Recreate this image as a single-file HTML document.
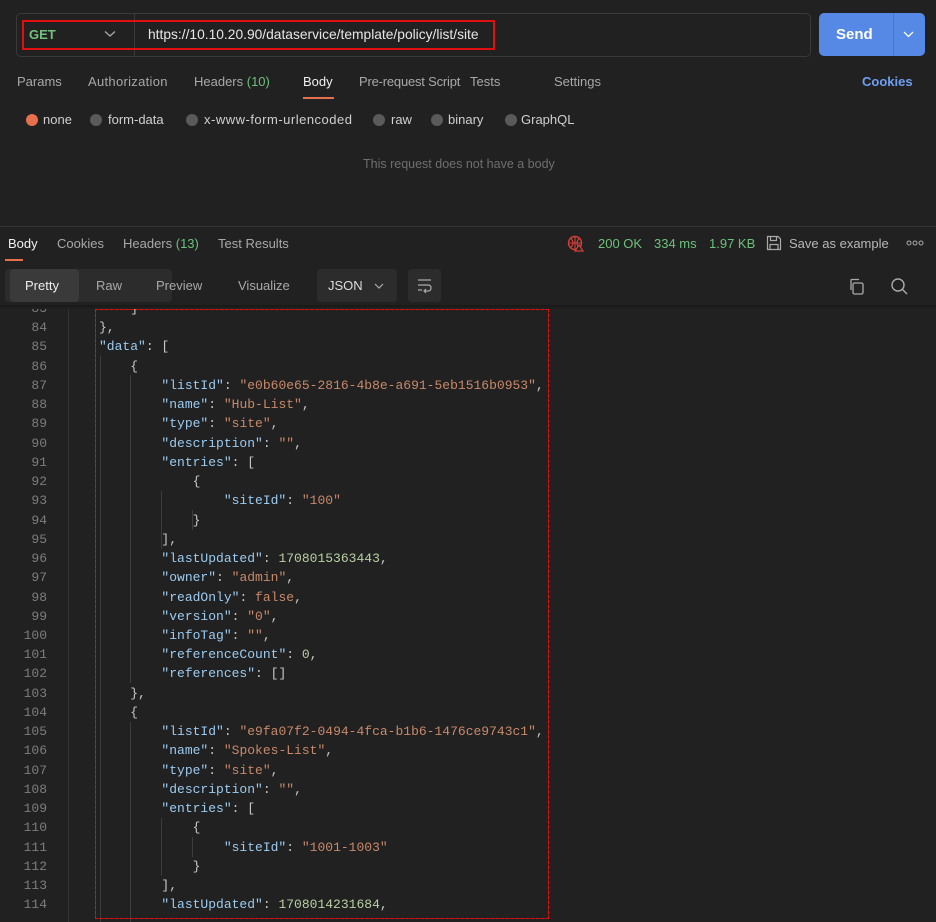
<!DOCTYPE html>
<html><head><meta charset="utf-8"><style>
*{margin:0;padding:0;box-sizing:border-box}
body{width:936px;height:922px;background:#212121;font-family:"Liberation Sans",sans-serif;font-size:13px;color:#a8a8a8;position:relative;overflow:hidden}
.a{position:absolute;white-space:nowrap}
.g{color:#6cc17a}
.code{position:absolute;left:0;top:309px;width:936px;height:613px;overflow:hidden}
.ln{position:absolute;left:0;width:47px;text-align:right;font-family:"Liberation Mono",monospace;font-size:13px;color:#7d7d7d}
.cl{position:absolute;left:99px;font-family:"Liberation Mono",monospace;font-size:13px;color:#c8c8c8;white-space:pre}
.k{color:#9ccbf0}.s{color:#c8896a}.n{color:#b9d0a4}
.gd{position:absolute;width:1px;background:#3c3c3c}
.radio{position:absolute;width:12px;height:12px;border-radius:50%;background:#5a5a5a;top:114px}
</style></head><body>
<!-- URL bar -->
<div class="a" style="left:16px;top:13px;width:795px;height:44px;border:1px solid #3a3a3a;border-radius:5px;background:#212121"></div>
<div class="a" style="left:134px;top:14px;width:1px;height:42px;background:#3a3a3a"></div>
<div class="a" style="left:22px;top:20px;width:473px;height:30px;border:2px solid #e01010"></div>
<div class="a g" style="left:29px;top:27px;font-weight:bold;font-size:13px;color:#72c27e">GET</div>
<svg class="a" style="left:104px;top:30px" width="12" height="8"><path d="M1 1.5L6 6L11 1.5" stroke="#aaa" fill="none" stroke-width="1.3"/></svg>
<div class="a" style="left:148px;top:27px;color:#e6e6e6;font-size:13.8px">https://10.10.20.90/dataservice/template/policy/list/site</div>
<div class="a" style="left:819px;top:13px;width:106px;height:43px;background:#5689e6;border-radius:5px"></div>
<div class="a" style="left:893px;top:13px;width:1px;height:43px;background:#4574c8"></div>
<div class="a" style="left:836px;top:26px;color:#fff;font-weight:bold;font-size:15px">Send</div>
<svg class="a" style="left:903px;top:31px" width="11" height="7"><path d="M1 1L5.5 5.5L10 1" stroke="#fff" fill="none" stroke-width="1.3"/></svg>
<!-- request tabs -->
<div class="a" style="left:17px;top:74px">Params</div>
<div class="a" style="left:88px;top:74px;letter-spacing:.3px">Authorization</div>
<div class="a" style="left:194px;top:74px">Headers <span class="g">(10)</span></div>
<div class="a" style="left:303px;top:74px;color:#f0f0f0">Body</div>
<div class="a" style="left:303px;top:97px;width:31px;height:2px;background:#e5704b"></div>
<div class="a" style="left:359px;top:74px;letter-spacing:-.2px">Pre-request Script</div>
<div class="a" style="left:469px;top:74px;left:469px;transform:translateX(0)"></div>
<div class="a" style="left:470px;top:74px">Tests</div>
<div class="a" style="left:554px;top:74px">Settings</div>
<div class="a" style="left:862px;top:74px;color:#6e9ff5;font-weight:bold">Cookies</div>
<!-- radios -->
<div class="radio" style="left:26px;background:#e5704b"></div><div class="a" style="left:43px;top:112px;color:#d0d0d0">none</div>
<div class="radio" style="left:90px"></div><div class="a" style="left:108px;top:112px;color:#d0d0d0">form-data</div>
<div class="radio" style="left:186px"></div><div class="a" style="left:204px;top:112px;color:#d0d0d0;letter-spacing:.5px">x-www-form-urlencoded</div>
<div class="radio" style="left:373px"></div><div class="a" style="left:391px;top:112px;color:#d0d0d0">raw</div>
<div class="radio" style="left:431px"></div><div class="a" style="left:448px;top:112px;color:#d0d0d0">binary</div>
<div class="radio" style="left:505px"></div><div class="a" style="left:521px;top:112px;color:#d0d0d0">GraphQL</div>
<div class="a" style="left:363px;top:157px;color:#6e6e6e;font-size:12.5px">This request does not have a body</div>
<div class="a" style="left:0;top:226px;width:936px;height:1px;background:#353535"></div>
<!-- response tabs -->
<div class="a" style="left:8px;top:236px;color:#f0f0f0">Body</div>
<div class="a" style="left:5px;top:259px;width:18px;height:2px;background:#e5704b"></div>
<div class="a" style="left:57px;top:236px">Cookies</div>
<div class="a" style="left:123px;top:236px">Headers <span class="g">(13)</span></div>
<div class="a" style="left:218px;top:236px">Test Results</div>
<svg class="a" style="left:567px;top:235px" width="18" height="17"><circle cx="8" cy="8" r="6.5" stroke="#d6403a" fill="none" stroke-width="1.4"/><path d="M1.5 8H14.5M8 1.5V14.5M4 3.5Q8 8 4 12.5M12 3.5Q8 8 12 12.5" stroke="#d6403a" fill="none" stroke-width="1.1"/><path d="M12 10L16 16H8Z" fill="#212121" stroke="#d6403a" stroke-width="1.2"/></svg>
<div class="a g" style="left:598px;top:236px">200 OK</div>
<div class="a g" style="left:654px;top:236px">334 ms</div>
<div class="a g" style="left:709px;top:236px">1.97 KB</div>
<svg class="a" style="left:766px;top:235px" width="16" height="16"><path d="M1.5 1.5H12L14.5 4V14.5H1.5Z" stroke="#aaa" fill="none" stroke-width="1.2"/><path d="M4.5 1.5V5.5H10.5V1.5M4 14.5V9.5H12V14.5" stroke="#aaa" fill="none" stroke-width="1.2"/></svg>
<div class="a" style="left:789px;top:236px;color:#b8b8b8">Save as example</div>
<svg class="a" style="left:906px;top:240px" width="18" height="6"><circle cx="3" cy="3" r="2" stroke="#aaa" fill="none"/><circle cx="9" cy="3" r="2" stroke="#aaa" fill="none"/><circle cx="15" cy="3" r="2" stroke="#aaa" fill="none"/></svg>
<!-- toolbar -->
<div class="a" style="left:5px;top:269px;width:167px;height:33px;background:#2c2c2c;border-radius:4px"></div>
<div class="a" style="left:10px;top:269px;width:69px;height:33px;background:#3a3a3a;border-radius:4px"></div>
<div class="a" style="left:25px;top:278px;color:#eee">Pretty</div>
<div class="a" style="left:96px;top:278px">Raw</div>
<div class="a" style="left:156px;top:278px">Preview</div>
<div class="a" style="left:238px;top:278px">Visualize</div>
<div class="a" style="left:317px;top:269px;width:80px;height:33px;background:#2c2c2c;border-radius:4px"></div>
<div class="a" style="left:328px;top:278px;color:#ddd">JSON</div>
<svg class="a" style="left:374px;top:283px" width="10" height="6"><path d="M1 1L5 5L9 1" stroke="#aaa" fill="none" stroke-width="1.2"/></svg>
<div class="a" style="left:408px;top:269px;width:33px;height:33px;background:#2c2c2c;border-radius:4px"></div>
<svg class="a" style="left:416px;top:277px" width="17" height="17"><path d="M2 3H15M2 8H12Q15 8 15 11Q15 14 12 14H9M2 13H6M10 12L8 14L10 16" stroke="#aaa" fill="none" stroke-width="1.2"/></svg>
<svg class="a" style="left:848px;top:278px" width="17" height="17"><rect x="5" y="5" width="10" height="11" rx="1.5" stroke="#aaa" fill="none" stroke-width="1.3"/><path d="M3 12V2.5Q3 1.5 4 1.5H11" stroke="#aaa" fill="none" stroke-width="1.3"/></svg>
<svg class="a" style="left:890px;top:277px" width="18" height="18"><circle cx="8" cy="8" r="6" stroke="#aaa" fill="none" stroke-width="1.4"/><path d="M12.5 12.5L17 17" stroke="#aaa" stroke-width="1.4"/></svg>
<div class="a" style="left:0;top:305px;width:936px;height:4px;background:linear-gradient(#181818,#212121)"></div>
<!-- code -->
<div class="code">
<div class="gd" style="left:68px;top:0;height:613px;background:#333"></div>
<div class="gd" style="left:100px;top:47px;height:566px"></div>
<div class="gd" style="left:130px;top:66px;height:308px"></div>
<div class="gd" style="left:161px;top:182px;height:58px"></div>
<div class="gd" style="left:192px;top:201px;height:20px"></div>
<div class="gd" style="left:130px;top:413px;height:200px"></div>
<div class="gd" style="left:161px;top:509px;height:58px"></div>
<div class="gd" style="left:192px;top:528px;height:20px"></div>
</div>
<div class="a" style="left:95px;top:309px;width:454px;height:610px;border:1px dashed #e01010;outline:1px solid rgba(224,16,16,.6);outline-offset:-1px"></div>
<div class="code" style="pointer-events:none">
<div class="ln" style="top:-10px;line-height:19.23px">83<br>84<br>85<br>86<br>87<br>88<br>89<br>90<br>91<br>92<br>93<br>94<br>95<br>96<br>97<br>98<br>99<br>100<br>101<br>102<br>103<br>104<br>105<br>106<br>107<br>108<br>109<br>110<br>111<br>112<br>113<br>114</div>
<div class="cl" style="top:-10px;line-height:19.23px">    ]
},
<span class="k">"data"</span>: [
    {
        <span class="k">"listId"</span>: <span class="s">"e0b60e65-2816-4b8e-a691-5eb1516b0953"</span>,
        <span class="k">"name"</span>: <span class="s">"Hub-List"</span>,
        <span class="k">"type"</span>: <span class="s">"site"</span>,
        <span class="k">"description"</span>: <span class="s">""</span>,
        <span class="k">"entries"</span>: [
            {
                <span class="k">"siteId"</span>: <span class="s">"100"</span>
            }
        ],
        <span class="k">"lastUpdated"</span>: <span class="n">1708015363443</span>,
        <span class="k">"owner"</span>: <span class="s">"admin"</span>,
        <span class="k">"readOnly"</span>: <span class="s">false</span>,
        <span class="k">"version"</span>: <span class="s">"0"</span>,
        <span class="k">"infoTag"</span>: <span class="s">""</span>,
        <span class="k">"referenceCount"</span>: <span class="n">0</span>,
        <span class="k">"references"</span>: []
    },
    {
        <span class="k">"listId"</span>: <span class="s">"e9fa07f2-0494-4fca-b1b6-1476ce9743c1"</span>,
        <span class="k">"name"</span>: <span class="s">"Spokes-List"</span>,
        <span class="k">"type"</span>: <span class="s">"site"</span>,
        <span class="k">"description"</span>: <span class="s">""</span>,
        <span class="k">"entries"</span>: [
            {
                <span class="k">"siteId"</span>: <span class="s">"1001-1003"</span>
            }
        ],
        <span class="k">"lastUpdated"</span>: <span class="n">1708014231684</span>,</div>
</div>
</body></html>
